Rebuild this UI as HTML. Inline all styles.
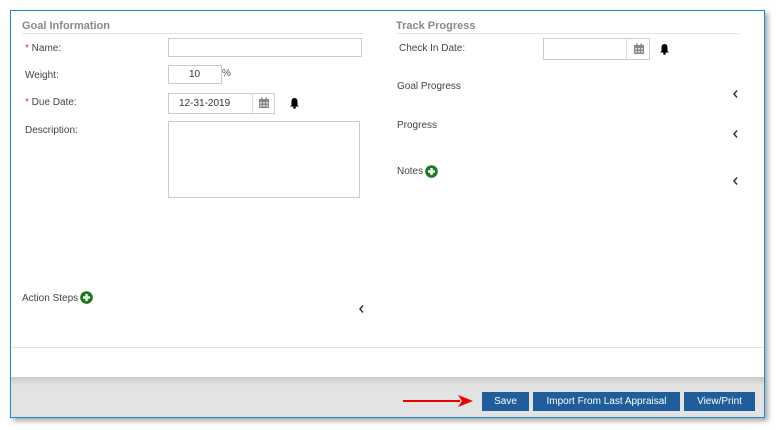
<!DOCTYPE html>
<html><head><meta charset="utf-8"><style>
*{margin:0;padding:0;box-sizing:border-box}
body{width:777px;height:430px;background:#fff;font-family:"Liberation Sans",sans-serif;font-size:10px;color:#555;position:relative;overflow:hidden}
.frame{position:absolute;left:10px;top:10px;width:755px;height:408px;border:1px solid #1e88c8;box-shadow:3px 3px 5px rgba(0,0,0,.35);background:#fff}
.a{position:absolute;white-space:nowrap}
.h{font-size:11px;font-weight:bold;color:#8a8a8a}
.hl{position:absolute;height:1px;background:#e4e4e4}
.in{position:absolute;border:1px solid #ccc;background:#fff}
.req{color:#d33}
.btn{position:absolute;top:392px;height:19px;background:#1f5d9b;color:#fff;font-size:10px;text-align:center;line-height:19px}
.lbl{color:#444}
</style></head><body>
<div class="frame"></div>
<div class="a h" style="left:22px;top:20px">Goal Information</div>
<div class="hl" style="left:22px;top:33px;width:342px"></div>
<div class="a h" style="left:396px;top:20px">Track Progress</div>
<div class="hl" style="left:396px;top:33px;width:343px"></div>

<div class="a lbl" style="left:25px;top:43px"><span class="req">*</span> Name:</div>
<div class="in" style="left:168px;top:38px;width:194px;height:19px"></div>
<div class="a lbl" style="left:25px;top:70px">Weight:</div>
<div class="in" style="left:168px;top:65px;width:54px;height:19px"></div>
<div class="a" style="left:189px;top:69px;color:#333">10</div>
<div class="a" style="left:222px;top:68px">%</div>
<div class="a lbl" style="left:25px;top:97px"><span class="req">*</span> Due Date:</div>
<div class="in" style="left:168px;top:93px;width:107px;height:21px"></div>
<div class="a" style="left:179px;top:98px;color:#333">12-31-2019</div>
<div class="a" style="left:252px;top:94px;width:1px;height:19px;background:#ddd"></div>
<svg class="a" style="left:258px;top:97px" width="12" height="12" viewBox="0 0 12 12"><rect x="1" y="2" width="10" height="9" fill="#888"/><rect x="3" y="0.5" width="1.5" height="3" fill="#888"/><rect x="7.5" y="0.5" width="1.5" height="3" fill="#888"/><g fill="#ddd"><rect x="2" y="5" width="2" height="1.5"/><rect x="5" y="5" width="2" height="1.5"/><rect x="8" y="5" width="2" height="1.5"/><rect x="2" y="8" width="2" height="1.5"/><rect x="5" y="8" width="2" height="1.5"/><rect x="8" y="8" width="2" height="1.5"/></g></svg>
<svg class="a" style="left:289px;top:97px" width="11" height="12" viewBox="0 0 11 12"><path d="M5.5 1C3 1 2.5 3 2.5 5V8L1 9.5H10L8.5 8V5C8.5 3 8 1 5.5 1Z" fill="#000"/><circle cx="5.5" cy="10.5" r="1.3" fill="#000"/></svg>
<div class="a lbl" style="left:25px;top:125px">Description:</div>
<div class="in" style="left:168px;top:121px;width:192px;height:77px"></div>

<div class="a lbl" style="left:22px;top:293px;color:#444">Action Steps</div>
<svg class="a" style="left:80px;top:291px" width="13" height="13" viewBox="0 0 13 13"><circle cx="6.5" cy="6.5" r="6.3" fill="#1b7a1b"/><path d="M6.5 3V10M3 6.5H10" stroke="#fff" stroke-width="2.4"/></svg>
<svg class="a" style="left:358px;top:304px" width="7" height="10" viewBox="0 0 7 10"><path d="M5 1.5L2 5L5 8.5" stroke="#333" stroke-width="1.5" fill="none"/></svg>

<div class="a lbl" style="left:399px;top:43px">Check In Date:</div>
<div class="in" style="left:543px;top:38px;width:107px;height:22px"></div>
<div class="a" style="left:626px;top:39px;width:1px;height:20px;background:#ddd"></div>
<svg class="a" style="left:633px;top:43px" width="12" height="12" viewBox="0 0 12 12"><rect x="1" y="2" width="10" height="9" fill="#888"/><rect x="3" y="0.5" width="1.5" height="3" fill="#888"/><rect x="7.5" y="0.5" width="1.5" height="3" fill="#888"/><g fill="#ddd"><rect x="2" y="5" width="2" height="1.5"/><rect x="5" y="5" width="2" height="1.5"/><rect x="8" y="5" width="2" height="1.5"/><rect x="2" y="8" width="2" height="1.5"/><rect x="5" y="8" width="2" height="1.5"/><rect x="8" y="8" width="2" height="1.5"/></g></svg>
<svg class="a" style="left:659px;top:43px" width="11" height="12" viewBox="0 0 11 12"><path d="M5.5 1C3 1 2.5 3 2.5 5V8L1 9.5H10L8.5 8V5C8.5 3 8 1 5.5 1Z" fill="#000"/><circle cx="5.5" cy="10.5" r="1.3" fill="#000"/></svg>

<div class="a lbl" style="left:397px;top:81px">Goal Progress</div>
<svg class="a" style="left:732px;top:89px" width="7" height="10" viewBox="0 0 7 10"><path d="M5 1.5L2 5L5 8.5" stroke="#333" stroke-width="1.5" fill="none"/></svg>
<div class="a lbl" style="left:397px;top:120px">Progress</div>
<svg class="a" style="left:732px;top:129px" width="7" height="10" viewBox="0 0 7 10"><path d="M5 1.5L2 5L5 8.5" stroke="#333" stroke-width="1.5" fill="none"/></svg>
<div class="a lbl" style="left:397px;top:166px;color:#444">Notes</div>
<svg class="a" style="left:425px;top:165px" width="13" height="13" viewBox="0 0 13 13"><circle cx="6.5" cy="6.5" r="6.3" fill="#1b7a1b"/><path d="M6.5 3V10M3 6.5H10" stroke="#fff" stroke-width="2.4"/></svg>
<svg class="a" style="left:732px;top:176px" width="7" height="10" viewBox="0 0 7 10"><path d="M5 1.5L2 5L5 8.5" stroke="#333" stroke-width="1.5" fill="none"/></svg>

<div class="hl" style="left:11px;top:347px;width:753px;background:#e2e2e2"></div>
<div class="a" style="left:11px;top:377px;width:753px;height:40px;background:linear-gradient(#c8c8c8,#e3e3e3 8px,#e3e3e3)"></div>

<svg class="a" style="left:400px;top:392px" width="75" height="18" viewBox="0 0 75 18"><path d="M3 9H60" stroke="#e00" stroke-width="2"/><path d="M58 3L73 9L58 15L62 9Z" fill="#e00"/></svg>
<div class="btn" style="left:482px;width:47px">Save</div>
<div class="btn" style="left:533px;width:147px">Import From Last Appraisal</div>
<div class="btn" style="left:684px;width:71px">View/Print</div>
</body></html>
